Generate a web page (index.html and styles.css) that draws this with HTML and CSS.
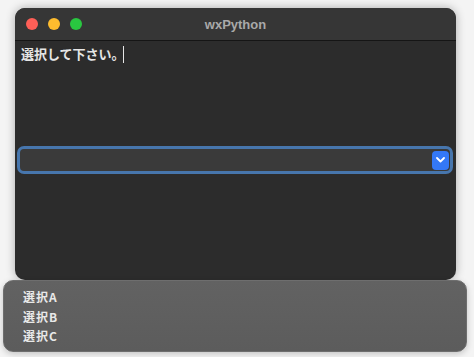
FILE: index.html
```html
<!DOCTYPE html>
<html lang="ja">
<head>
    <meta charset="UTF-8">
    <meta name="viewport" content="width=device-width, initial-scale=1.0">
    <title>wxPython</title>
    <link rel="stylesheet" href="styles.css">
</head>
<body>
    <div class="screen">
        <div class="window">
            <div class="titlebar">
                <div class="lights">
                    <span class="light red"></span>
                    <span class="light yellow"></span>
                    <span class="light green"></span>
                </div>
                <div class="title">wxPython</div>
            </div>

            <div class="text-area">
                <span class="label">選択して下さい。</span><span class="caret"></span>
            </div>

            <div class="combo">
                <div class="combo-field"></div>
                <div class="combo-btn">
                    <svg width="9" height="6" viewBox="0 0 9 6">
                        <path d="M1 1 L4.5 4.5 L8 1" fill="none" stroke="#fff" stroke-width="1.8" stroke-linecap="round" stroke-linejoin="round"/>
                    </svg>
                </div>
            </div>
        </div>

        <!-- open dropdown list -->
        <div class="popup">
            <div class="item">選択A</div>
            <div class="item">選択B</div>
            <div class="item">選択C</div>
        </div>
    </div>
</body>
</html>
```

FILE: styles.css
```css
body, html {
    margin: 0;
    padding: 0;
    height: 100%;
    background: #f4f4f4;
    font-family: "Noto Sans CJK JP", "Noto Sans", sans-serif;
}

.screen {
    position: relative;
    width: 474px;
    height: 357px;
    padding-top: 8px;
    box-sizing: border-box;
}

.window {
    width: 441px;
    height: 272px;
    margin-left: 15px;
    background: #2c2c2c;
    border-radius: 10px;
    box-shadow: 0 0 10px rgba(0, 0, 0, 0.3);
    display: flex;
    flex-direction: column;
    overflow: hidden;
}

.titlebar {
    position: relative;
    height: 32px;
    flex: none;
    background: #363636;
    border-bottom: 1px solid #151515;
    display: flex;
    align-items: center;
}

.lights {
    display: flex;
    gap: 10px;
    padding-left: 11px;
}

.light {
    width: 12px;
    height: 12px;
    border-radius: 50%;
}

.red { background: #fe5f57; }
.yellow { background: #febc2e; }
.green { background: #29c740; }

.title {
    position: absolute;
    left: 0;
    right: 0;
    text-align: center;
    font-family: "Liberation Sans", Arial, sans-serif;
    font-weight: bold;
    font-size: 13px;
    color: #a9a9a9;
}

.text-area {
    height: 105px;
    flex: none;
    padding: 4px 0 0 6px;
    box-sizing: border-box;
    display: flex;
    align-items: flex-start;
}

.label {
    color: #e6e6e6;
    font-size: 13px;
    font-weight: bold;
    line-height: 18px;
}

.caret {
    width: 1px;
    height: 17px;
    margin-top: 1px;
    margin-left: -2px;
    background: #e6e6e6;
}

.combo {
    margin: 0 3px 0 2px;
    height: 28px;
    box-sizing: border-box;
    border: 3px solid #4776ad;
    border-radius: 7px;
    background: #3a3a3a;
    display: flex;
    align-items: center;
    padding-right: 1px;
}

.combo-field {
    flex: 1;
}

.combo-btn {
    width: 17px;
    height: 19px;
    border-radius: 4px;
    background: #3478f6;
    display: flex;
    align-items: center;
    justify-content: center;
}

.popup {
    position: absolute;
    left: 3px;
    top: 280px;
    width: 464px;
    height: 72px;
    box-sizing: border-box;
    background: linear-gradient(#626262, #5c5c5c);
    border: 1px solid #6e6e6e;
    border-radius: 10px;
    padding: 6px 0 0 19px;
    box-shadow: 0 2px 6px rgba(0, 0, 0, 0.2);
}

.item {
    color: #e8e8e8;
    font-size: 12px;
    font-weight: bold;
    line-height: 19.5px;
    letter-spacing: 1px;
}
```
